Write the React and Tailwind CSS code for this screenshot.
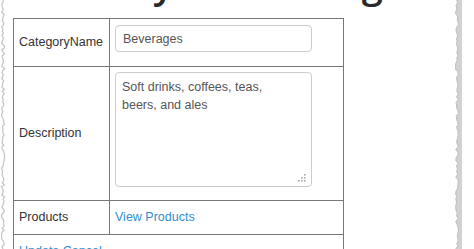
import { useMemo } from "react";

function jagged(seed, count, height, base, amp) {
  let s = seed;
  const rand = () => {
    s = (s * 9301 + 49297) % 233280;
    return s / 233280;
  };
  const pts = [];
  for (let i = 0; i <= count; i++) {
    const y = (i / count) * height;
    pts.push(`${(base + (rand() - 0.5) * amp).toFixed(1)},${y.toFixed(1)}`);
  }
  return pts.join(" ");
}

const TornEdges = () => {
  const left = useMemo(() => jagged(7, 120, 249, 3, 3.2), []);
  const right = useMemo(() => jagged(31, 90, 249, 457, 3), []);
  return (
    <svg
      className="pointer-events-none absolute inset-0"
      width="474"
      height="249"
      viewBox="0 0 474 249"
      aria-hidden="true"
    >
      <polyline points={left} fill="none" stroke="#c4c4c4" strokeWidth="1.2" />
      <polygon points={`${right} 462,249 462,0`} fill="#d2d2d2" />
      <polyline points={right} fill="none" stroke="#bdbdbd" strokeWidth="1" />
    </svg>
  );
};

const Grip = () => (
  <svg className="absolute bottom-[4px] right-[5px]" width="10" height="10" viewBox="0 0 10 10" aria-hidden="true">
    {[
      [8, 2],
      [5, 5],
      [8, 5],
      [2, 8],
      [5, 8],
      [8, 8]
    ].map(([x, y]) => (
      <rect key={`${x}-${y}`} x={x - 1} y={y - 1} width="1.6" height="1.6" fill="#a8a8a8" />
    ))}
  </svg>
);

export default function App() {
  return (
    <div className="relative h-[249px] w-[474px] overflow-hidden bg-white font-['Liberation_Sans',Arial,sans-serif] text-[12.5px] text-[#333]">
      <div className="pl-[13px]">
        <h2 className="-mt-[37px] mb-[15px] whitespace-nowrap pl-[34px] font-['Open_Sans',sans-serif] text-[38px] font-semibold leading-[40px] text-[#2a2a2a]">
          Modify Data Using
        </h2>

        <table className="w-[331px] border-collapse">
          <tbody>
            <tr className="h-[48px]">
              <td className="w-[96px] border border-[#777] px-[5px] align-middle">CategoryName</td>
              <td className="border border-[#777] px-[5px] pb-[14px] pt-[6px] align-top">
                <input
                  readOnly
                  defaultValue="Beverages"
                  className="h-[27px] w-[197px] rounded-[4px] border border-[#ccc] px-[7px] text-[12.5px] text-[#555] outline-none"
                />
              </td>
            </tr>
            <tr className="h-[134px]">
              <td className="border border-[#777] px-[5px] align-middle">Description</td>
              <td className="border border-[#777] px-[5px] pb-[13px] pt-[5px] align-top">
                <div className="relative h-[115px] w-[197px]">
                  <textarea
                    readOnly
                    defaultValue="Soft drinks, coffees, teas, beers, and ales"
                    className="h-full w-full resize-none rounded-[4px] border border-[#ccc] pl-[6px] pr-[36px] pt-[5px] text-[12.5px] leading-[18px] text-[#555] outline-none"
                  />
                  <Grip />
                </div>
              </td>
            </tr>
            <tr className="h-[34px]">
              <td className="border border-[#777] px-[5px] align-middle">Products</td>
              <td className="border border-[#777] px-[5px] align-middle">
                <a className="text-[#2f8fd0]">View Products</a>
              </td>
            </tr>
            <tr className="h-[34px]">
              <td colSpan={2} className="border-x border-[#777] px-[5px] pt-[7px] align-top">
                <a className="text-[#2f8fd0] underline">Update</a>{" "}
                <a className="text-[#2f8fd0] underline">Cancel</a>
              </td>
            </tr>
          </tbody>
        </table>
      </div>
      <TornEdges />
    </div>
  );
}
